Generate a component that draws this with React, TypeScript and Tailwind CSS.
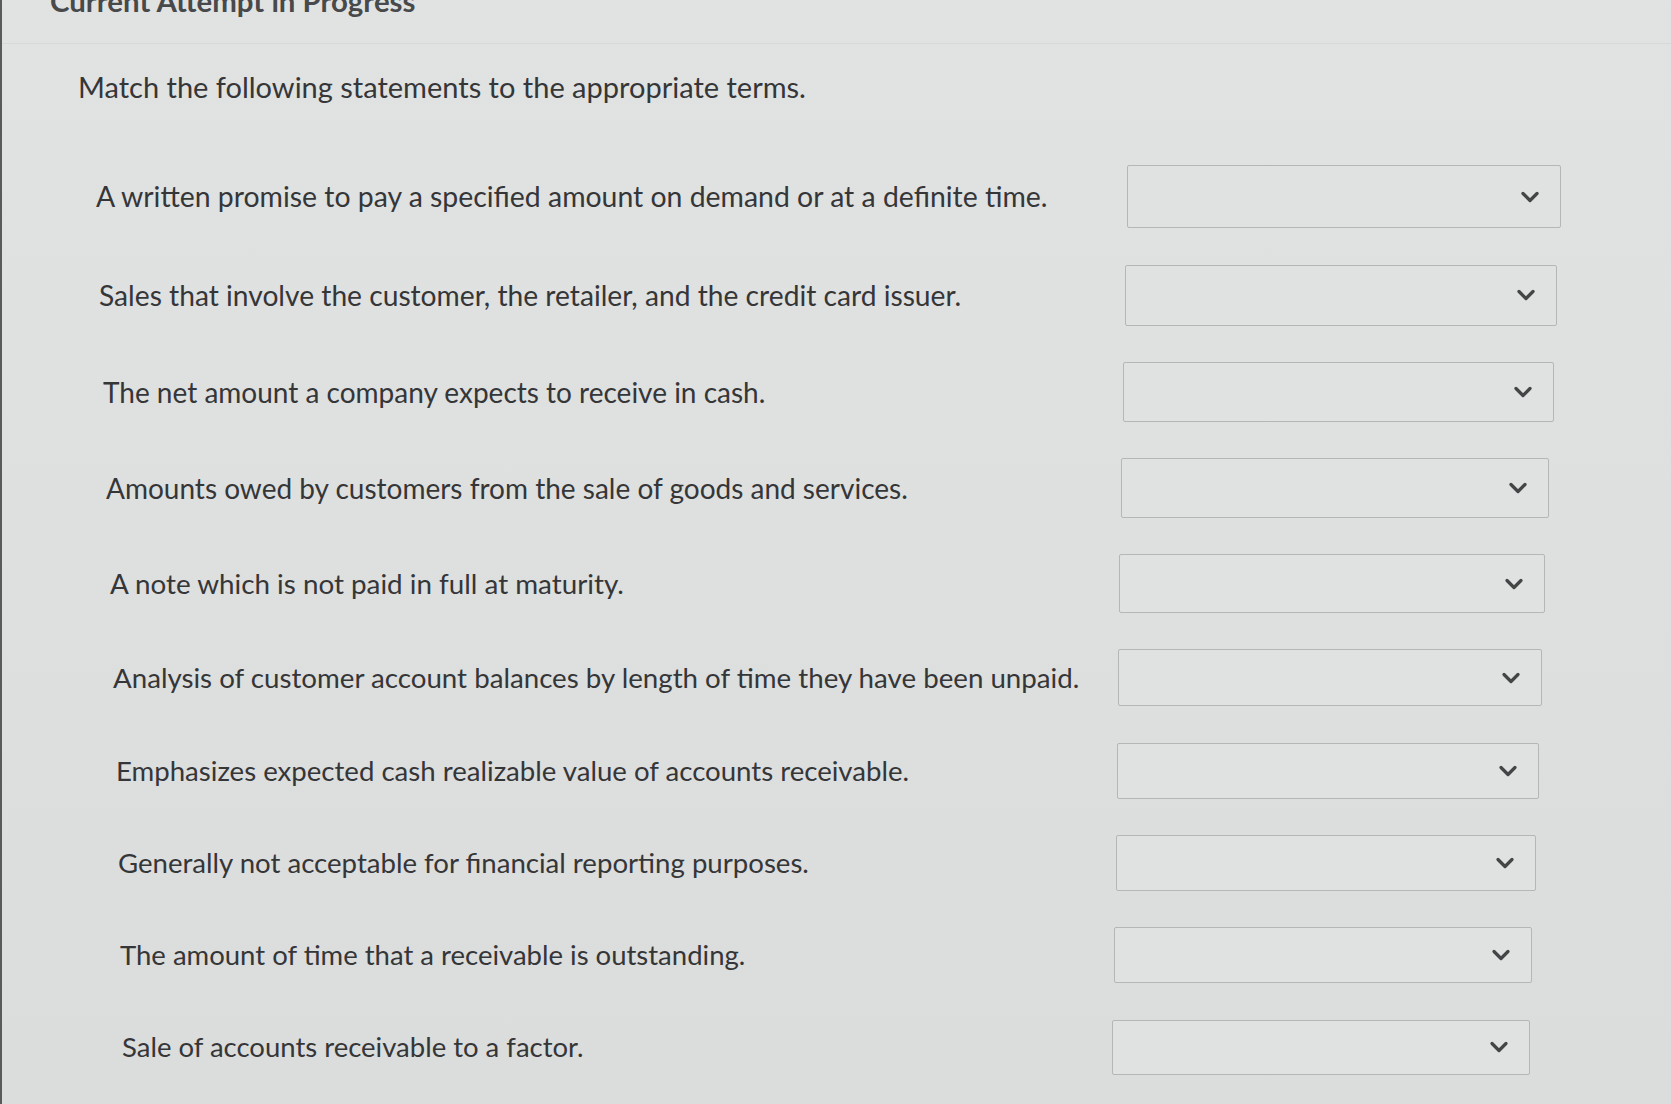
import { ChevronDown } from 'lucide-react';

interface Row {
  text: string;
  height: string;
  textBox: string;
  box: string;
}

// each row keeps its own offsets, the photo is taken at a slight angle
const rows: Row[] = [
  { text: 'A written promise to pay a specified amount on demand or at a definite time.', height: 'h-[99px]', textBox: 'w-[1125px] pl-[94px] text-[28.4px]', box: 'w-[434px] h-[63px]' },
  { text: 'Sales that involve the customer, the retailer, and the credit card issuer.', height: 'h-[98px]', textBox: 'w-[1123px] pl-[97px] text-[28.2px]', box: 'w-[432px] h-[61px]' },
  { text: 'The net amount a company expects to receive in cash.', height: 'h-[96px]', textBox: 'w-[1121px] pl-[101px] text-[28px]', box: 'w-[431px] h-[60px]' },
  { text: 'Amounts owed by customers from the sale of goods and services.', height: 'h-[96px]', textBox: 'w-[1119px] pl-[104px] text-[28px]', box: 'w-[428px] h-[60px]' },
  { text: 'A note which is not paid in full at maturity.', height: 'h-[95px]', textBox: 'w-[1117px] pl-[108px] text-[27.8px]', box: 'w-[426px] h-[59px]' },
  { text: 'Analysis of customer account balances by length of time they have been unpaid.', height: 'h-[93px]', textBox: 'w-[1116px] pl-[111px] text-[27.7px]', box: 'w-[424px] h-[57px]' },
  { text: 'Emphasizes expected cash realizable value of accounts receivable.', height: 'h-[93px]', textBox: 'w-[1115px] pl-[114px] text-[27.6px]', box: 'w-[422px] h-[56px]' },
  { text: 'Generally not acceptable for financial reporting purposes.', height: 'h-[92px]', textBox: 'w-[1114px] pl-[116px] text-[27.6px]', box: 'w-[420px] h-[56px]' },
  { text: 'The amount of time that a receivable is outstanding.', height: 'h-[92px]', textBox: 'w-[1112px] pl-[118px] text-[27.5px]', box: 'w-[418px] h-[56px]' },
  { text: 'Sale of accounts receivable to a factor.', height: 'h-[92px]', textBox: 'w-[1110px] pl-[120px] text-[27.5px]', box: 'w-[418px] h-[55px]' },
];

function MatchSelect({ className }: { className: string }) {
  return (
    <div
      className={`${className} flex items-center justify-end pr-[16px] border-[1.5px] border-[#b5b6b6] rounded-[2px] bg-[#e0e1e1]`}
    >
      <ChevronDown size={28} strokeWidth={2.8} className="text-[#444547]" />
    </div>
  );
}

export default function App() {
  return (
    <div className="w-full h-[1104px] overflow-hidden bg-linear-to-b from-[#e1e2e2] to-[#dbdcdc] border-l-2 border-[#5a5a5a] [font-family:Lato,sans-serif] text-[#353638]">
      <div className="h-[44px] border-b border-[#d7d8d8] relative">
        <div className="absolute left-[48px] -top-[14px] text-[29.4px] font-bold text-[#48494a] leading-none">
          Current Attempt in Progress
        </div>
      </div>

      <div className="h-[103px] pl-[76px] pt-[28px]">
        <h2 className="text-[29px] leading-none">
          Match the following statements to the appropriate terms.
        </h2>
      </div>

      <div className="flex flex-col">
        {rows.map((row) => (
          <div key={row.text} className={`${row.height} flex items-center`}>
            <div className={`${row.textBox} shrink-0 leading-none`}>{row.text}</div>
            <MatchSelect className={`${row.box} shrink-0`} />
          </div>
        ))}
      </div>
    </div>
  );
}
